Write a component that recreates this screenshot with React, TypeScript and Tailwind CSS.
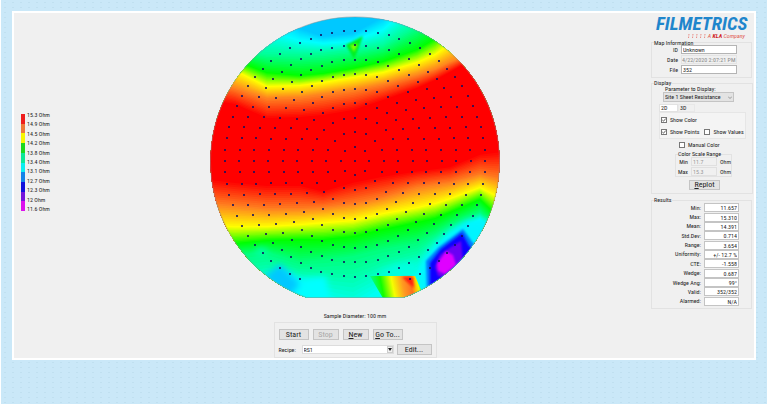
import { useState } from 'react';

const LEGEND = [
  { label: '15.3 Ohm', color: '#ee1c1c' },
  { label: '14.9 Ohm', color: '#ee7838' },
  { label: '14.5 Ohm', color: '#f6f600' },
  { label: '14.2 Ohm', color: '#1cd81c' },
  { label: '13.8 Ohm', color: '#0ce896' },
  { label: '13.4 Ohm', color: '#0ceef0' },
  { label: '13.1 Ohm', color: '#1484e8' },
  { label: '12.7 Ohm', color: '#1010dc' },
  { label: '12.3 Ohm', color: '#7414dc' },
  { label: '12 Ohm', color: '#dc10ee' },
  { label: '11.6 Ohm', color: '#dc10ee' },
];

const RESULTS = [
  ['Min', '11.657'],
  ['Max', '15.310'],
  ['Mean', '14.391'],
  ['Std.Dev', '0.714'],
  ['Range', '3.654'],
  ['Uniformity', '+/- 12.7 %'],
  ['CTE', '-1.558'],
  ['Wedge', '0.687'],
  ['Wedge Ang', '99°'],
  ['Valid', '352/352'],
  ['Alarmed', 'N/A'],
];

type Rgb = [number, number, number];

// Contour heights, sampled at the x positions below
const XS = [210, 235, 267, 300, 323, 353, 383, 417, 435, 450, 480, 500];

const CONTOURS: { color: Rgb; ys: number[] }[] = [
  { color: [0, 200, 255], ys: [-60, -30, -5, 28, 36, 33, 16, -14, -40, -60, -90, -110] },
  { color: [0, 255, 255], ys: [20, 20, 30, 40, 43, 41, 29, 0, -10, -20, -50, -70] },
  { color: [0, 255, 150], ys: [40, 50, 54, 54, 53, 50, 45, 25, 10, 0, -20, -40] },
  { color: [0, 255, 0], ys: [50, 60, 72, 75, 73, 68, 61, 49, 38, 25, 10, 0] },
  { color: [255, 255, 0], ys: [60, 70, 86, 85, 82, 77, 72, 62, 54, 43, 25, 10] },
  { color: [255, 128, 32], ys: [80, 88, 98, 97, 94, 90, 84, 75, 69, 62, 50, 40] },
  { color: [255, 0, 0], ys: [100, 104, 118, 117, 115, 110, 100, 88, 80, 72, 55, 45] },
  { color: [255, 0, 0], ys: [178, 181, 184, 184, 190, 181, 175, 170, 168, 166, 153, 150] },
  { color: [255, 128, 32], ys: [203, 205, 208, 208, 207, 203, 197, 187, 184, 182, 174, 178] },
  { color: [255, 255, 0], ys: [225, 226, 226, 224, 222, 220, 213, 207, 203, 198, 187, 197] },
  { color: [0, 255, 0], ys: [242, 243, 240, 239, 239, 236, 229, 222, 218, 212, 199, 218] },
  { color: [0, 255, 128], ys: [262, 255, 252, 262, 260, 256, 249, 243, 234, 225, 212, 230] },
  { color: [0, 255, 255], ys: [310, 300, 290, 290, 300, 310, 290, 275, 250, 235, 220, 238] },
];

const STEPS = 12;

// Blend neighbouring contours into thin bands, each filled down to the bottom
const bands = CONTOURS.slice(0, -1).flatMap((from, i) => {
  const to = CONTOURS[i + 1];
  return Array.from({ length: STEPS }, (_, s) => {
    const t = s / STEPS;
    const rgb = from.color.map((c, k) => Math.round(c + (to.color[k] - c) * t));
    const line = XS.map((x, k) => `${x} ${(from.ys[k] + (to.ys[k] - from.ys[k]) * t).toFixed(1)}`);
    return { fill: `rgb(${rgb.join(',')})`, d: `M${line.join('L')}L500 300L210 300Z` };
  });
});

// Polar sampling: 8 more points on every ring, the flat cuts off the outermost ones
const points = [{ x: 355, y: 161 }];
for (let ring = 1; ring <= 9; ring++) {
  const count = ring * 8;
  for (let n = 0; n < count; n++) {
    const angle = (n / count) * 360;
    if (ring === 9 && Math.abs(angle - 180) <= 20.5) continue;
    const rad = (angle * Math.PI) / 180;
    points.push({ x: 355 + Math.sin(rad) * ring * 14.45, y: 161 - Math.cos(rad) * ring * 14.45 });
  }
}

function WaferMap({ showColor, showPoints }: { showColor: boolean; showPoints: boolean }) {
  return (
    <svg viewBox="210 16 290 282" className="w-[290px] max-w-full" role="img" aria-label="Wafer map">
      <defs>
        <clipPath id="wafer">
          <path d="M306.500 297.500A144.500 144.500 0 1 1 403.500 297.500Z" />
        </clipPath>
        <filter id="soft1" x="-50%" y="-50%" width="200%" height="200%">
          <feGaussianBlur stdDeviation="1.3" />
        </filter>
        <filter id="soft3" x="-50%" y="-50%" width="200%" height="200%">
          <feGaussianBlur stdDeviation="3" />
        </filter>
        <linearGradient id="wedge" gradientUnits="userSpaceOnUse" x1="371" y1="284" x2="420" y2="274">
          <stop offset="0" stopColor="#00ff96" />
          <stop offset="0.2" stopColor="#10ff00" />
          <stop offset="0.42" stopColor="#f4ff00" />
          <stop offset="0.62" stopColor="#ff9a20" />
          <stop offset="0.78" stopColor="#ff7020" />
          <stop offset="0.86" stopColor="#ffc000" />
          <stop offset="0.92" stopColor="#e0ff00" />
          <stop offset="1" stopColor="#00ff20" />
        </linearGradient>
      </defs>
      <g clipPath="url(#wafer)">
        <rect x="210" y="16" width="290" height="282" fill={showColor ? '#00c8ff' : '#ffffff'} />
        {showColor && (
          <>
            {bands.map((band, i) => (
              <path key={i} d={band.d} fill={band.fill} />
            ))}

            {/* High spot near the top */}
            <path d="M346 45L363 36L358 50L354 59Z" fill="#00f020" filter="url(#soft1)" />
            <path d="M350 45L358 44L354 52Z" fill="#80ff00" filter="url(#soft1)" />

            {/* Cool area at the lower left */}
            <circle cx="261" cy="253" r="6" fill="#00ff9c" filter="url(#soft3)" />
            <path d="M278 268L300 279L326 276L330 300L296 304Z" fill="#00ffff" filter="url(#soft3)" />
            <path d="M280 264L264 277L288 298L300 284Z" fill="#00c8ff" filter="url(#soft3)" />

            {/* Cool streak above the wedge */}
            <path d="M374 274L396 264L416 262L416 276Z" fill="#00ffe0" filter="url(#soft3)" />

            {/* Low spot at the lower right */}
            <path d="M420 296L422 262L436 246L466 221L490 220L500 236L440 310Z" fill="#00f4ff" filter="url(#soft3)" />
            <path d="M427 296L426 261L439 247L463 229L473 243L485 250L440 306Z" fill="#0078ff" filter="url(#soft1)" />
            <path d="M430 294L430 263L441 249L462 233L469 246L480 254L440 300Z" fill="#1000ff" filter="url(#soft1)" />
            <path d="M435 267L440 255L451 247L461 241L463 262L448 278L438 276Z" fill="#6a00f4" filter="url(#soft1)" />
            <path d="M437 264L446 251L453 255L456 265L445 274L438 271Z" fill="#e000ff" filter="url(#soft1)" />

            {/* Hot wedge beside the flat */}
            <path d="M370 276L415 276L422 292L396 302L384 300Z" fill="url(#wedge)" />
            <path d="M402 277L413 277L414 288Z" fill="#ff2010" filter="url(#soft1)" />
          </>
        )}
      </g>
      {showPoints &&
        points.map((p, i) => (
          <rect key={i} x={Math.round(p.x) - 1} y={Math.round(p.y) - 1} width="2" height="2" fill="#101060" fillOpacity="0.8" />
        ))}
      <path d="M306.500 297.500A144.500 144.500 0 1 1 403.500 297.500Z" fill="none" stroke="#909090" strokeOpacity="0.5" />
    </svg>
  );
}

function Check({ label, checked, onChange }: { label: string; checked: boolean; onChange: (v: boolean) => void }) {
  return (
    <label className="flex items-center gap-[3px]">
      <span className="relative flex size-[6px]">
        <input
          type="checkbox"
          checked={checked}
          onChange={(e) => onChange(e.target.checked)}
          className="size-[6px] appearance-none border border-[#777] bg-white"
        />
        {checked && (
          <svg viewBox="0 0 6 6" className="pointer-events-none absolute inset-0">
            <path d="M1.300 3L2.500 4.200L4.800 1.500" fill="none" stroke="#333" strokeWidth="0.8" />
          </svg>
        )}
      </span>
      {label}
    </label>
  );
}

const group = 'border border-[#e2e2e2]';
const button = 'border border-[#c4c4c4] bg-[#e3e3e3] text-center text-[8px] leading-[8px]';

export default function App() {
  const [showColor, setShowColor] = useState(true);
  const [showPoints, setShowPoints] = useState(true);
  const [showValues, setShowValues] = useState(false);
  const [manualColor, setManualColor] = useState(false);

  return (
    <div className="min-h-screen border-x border-b border-white bg-[#cae8f8] bg-[radial-gradient(circle,#c0e0f0_0_0.5px,transparent_1px)] bg-[size:8px_5px] px-[11px] pt-[11px] pb-11 font-['Liberation_Sans_Narrow','Roboto_Condensed','Liberation_Sans',sans-serif] text-[6px] leading-[8px] text-[#222]">
      <div className="flex border-2 border-white bg-[#f0f0f0]">
        {/* Color scale */}
        <aside className="flex w-[45px] shrink-0 gap-[2px] pt-[101px] pl-[7px]">
          <div className="flex h-[97px] w-[4px] flex-col">
            {LEGEND.slice(0, 10).map((item) => (
              <span key={item.label} className="flex-1" style={{ backgroundColor: item.color }} />
            ))}
          </div>
          <ul className="-mt-[3px] flex h-[102px] flex-col justify-between whitespace-nowrap">
            {LEGEND.map((item) => (
              <li key={item.label}>{item.label}</li>
            ))}
          </ul>
        </aside>

        <main className="flex min-w-0 flex-1 flex-col items-center pt-[3px]">
          <WaferMap showColor={showColor} showPoints={showPoints} />
          <p className="mt-[14px]">Sample Diameter: 100 mm</p>
          <div className={`${group} mt-[2px] w-[163px] px-[4px] pt-[6px] pb-[2px]`}>
            <div className="flex gap-[4px]">
              <button type="button" className={`${button} h-[11px] w-[30px]`}>Start</button>
              <button type="button" disabled className={`${button} h-[11px] w-[26px] bg-[#cccccc] text-[#a8a8a8]`}>Stop</button>
              <button type="button" className={`${button} h-[11px] w-[26px]`}><u>N</u>ew</button>
              <button type="button" className={`${button} h-[11px] w-[30px]`}><u>G</u>o To...</button>
            </div>
            <div className="mt-[4px] flex items-center gap-[3px]">
              <label htmlFor="recipe" className="w-[20px]">Recipe:</label>
              <div className="relative flex-1">
                <select id="recipe" className="block h-[9px] w-full appearance-none border border-[#dddddd] bg-white pl-px leading-[7px]">
                  <option>RS1</option>
                </select>
                <span className="pointer-events-none absolute inset-y-px right-px flex w-[6px] items-center justify-center border border-[#cccccc] bg-[#f0f0f0]">
                  <svg viewBox="0 0 4 3" className="w-[4px]"><path d="M0 0H4L2 3Z" fill="#222" /></svg>
                </span>
              </div>
              <button type="button" className={`${button} h-[11px] w-[35px]`}>Edit...</button>
            </div>
          </div>
        </main>

        <aside className="w-[103px] shrink-0 pt-[2px] pr-[2px]">
          <header className="pl-[5px] whitespace-nowrap">
            <h1 className="text-[19px] leading-[18px] font-bold text-[#1f86cc] italic">FILMETRICS</h1>
            <p className="flex items-center justify-end gap-[2px] pr-[7px] text-[6px] leading-[5px] text-[#e0554c] italic">
              <svg viewBox="0 0 18 4" className="w-[18px]" aria-hidden="true">
                <path d="M1 0L0.500 4M5 0L4.500 4M9 0L8.500 4M13 0L12.500 4M17 0L16.500 4" stroke="#e88880" strokeWidth="1" strokeDasharray="1 0.5" />
              </svg>
              <span>A <b className="text-[#d0201c]">KLA</b> Company</span>
            </p>
          </header>

          <fieldset className={`${group} mt-[2px] grid grid-cols-[26px_1fr] items-center gap-x-[3px] gap-y-px pr-[14px] pb-[3px]`}>
            <legend className="ml-[2px] h-[5px] leading-[6px]">Map Information</legend>
            <label htmlFor="map-id" className="text-right">ID</label>
            <input id="map-id" defaultValue="Unknown" className="h-[9px] w-full border border-[#b4b4b4] bg-white px-px" />
            <label htmlFor="map-date" className="text-right">Date</label>
            <input id="map-date" readOnly value="4/22/2020 2:07:21 PM" className="h-[9px] w-full border border-[#e4e4e4] text-[#888]" />
            <label htmlFor="map-file" className="text-right">File</label>
            <input id="map-file" defaultValue="352" className="h-[9px] w-full border border-[#b4b4b4] bg-white px-px" />
          </fieldset>

          <fieldset className={`${group} mt-[2px] pr-[6px] pb-[3px] pl-[7px]`}>
            <legend className="-ml-[5px] h-[6px] leading-[6px]">Display</legend>
            <label htmlFor="parameter" className="block pl-[6px] leading-[6px]">Parameter to Display:</label>
            <div className="relative ml-[4px] w-[71px]">
              <select id="parameter" className="block h-[10px] w-full appearance-none border border-[#c4c4c4] bg-[#e3e3e3] pl-px">
                <option>Site 1 Sheet Resistance</option>
              </select>
              <svg viewBox="0 0 4 3" className="pointer-events-none absolute top-[4px] right-[2px] w-[4px]"><path d="M0 0.500L2 2.500L4 0.500" fill="none" stroke="#666" strokeWidth="0.6" /></svg>
            </div>
            <div className="mt-[2px] flex" role="tablist">
              <button type="button" role="tab" aria-selected="true" className="h-[8px] w-[19px] border border-[#e2e2e2] bg-white pl-px text-left leading-[6px]">2D</button>
              <button type="button" role="tab" aria-selected="false" className="h-[8px] w-[17px] border border-[#e8e8e8] pl-px text-left leading-[6px]">3D</button>
            </div>
            <div className="border border-[#e6e6e6] bg-[#f4f4f4] pt-[3px] pb-[2px] pl-px">
              <Check label="Show Color" checked={showColor} onChange={setShowColor} />
              <div className="mt-[4px] flex gap-[5px] whitespace-nowrap">
                <Check label="Show Points" checked={showPoints} onChange={setShowPoints} />
                <Check label="Show Values" checked={showValues} onChange={setShowValues} />
              </div>
            </div>
            <div className="mt-[2px] ml-[20px]">
              <Check label="Manual Color" checked={manualColor} onChange={setManualColor} />
            </div>
            <fieldset className={`${group} mt-[2px] mr-[14px] ml-[16px] grid grid-cols-[12px_26px_1fr] items-center gap-x-[3px] gap-y-px`}>
              <legend className="ml-[2px] h-[6px] leading-[6px] whitespace-nowrap">Color Scale Range</legend>
              <label htmlFor="scale-min" className="text-right">Min</label>
              <input id="scale-min" disabled={!manualColor} defaultValue="11.7" className="h-[9px] w-full border border-[#e0e0e0] px-px text-[#999]" />
              <span>Ohm</span>
              <label htmlFor="scale-max" className="text-right">Max</label>
              <input id="scale-max" disabled={!manualColor} defaultValue="15.3" className="h-[9px] w-full border border-[#e0e0e0] px-px text-[#999]" />
              <span>Ohm</span>
            </fieldset>
            <button type="button" className={`${button} mt-[3px] ml-[30px] block h-[10px] w-[31px]`}><u>R</u>eplot</button>
          </fieldset>

          <fieldset className={`${group} mt-[3px] pr-[12px] pb-[2px]`}>
            <legend className="ml-[2px] h-[6px] leading-[6px]">Results</legend>
            <div className="grid h-[103px] auto-rows-fr grid-cols-[1fr_35px] gap-x-[3px]">
              {RESULTS.map(([name, value]) => (
                <div key={name} className="col-span-2 grid grid-cols-subgrid items-center">
                  <label htmlFor={`result-${name}`} className="text-right">{name}:</label>
                  <input
                    id={`result-${name}`}
                    readOnly
                    value={value}
                    className="h-[9px] w-full border border-[#c4c4c4] bg-white px-px text-right"
                  />
                </div>
              ))}
            </div>
          </fieldset>
        </aside>
      </div>
    </div>
  );
}
